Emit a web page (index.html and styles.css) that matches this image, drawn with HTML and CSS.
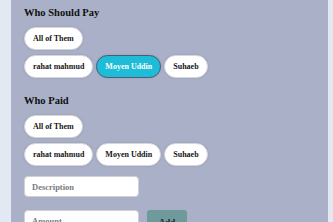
FILE: index.html
```html
<!DOCTYPE html>
<html>
<head>
<meta charset="utf-8">
<link rel="stylesheet" href="styles.css">
</head>
<body>
<div class="panel">
  <h3 class="title">Who Should Pay</h3>
  <div class="row first"><button class="pill">All of Them</button></div>
  <div class="row">
    <button class="pill">rahat mahmud</button>
    <button class="pill active">Moyen Uddin</button>
    <button class="pill">Suhaeb</button>
  </div>
  <h3 class="title second">Who Paid</h3>
  <div class="row first"><button class="pill">All of Them</button></div>
  <div class="row">
    <button class="pill">rahat mahmud</button>
    <button class="pill">Moyen Uddin</button>
    <button class="pill">Suhaeb</button>
  </div>
  <div class="field"><input class="input" placeholder="Description"></div>
  <div class="field line">
    <input class="input" placeholder="Amount">
    <button class="add">Add</button>
  </div>
</div>
</body>
</html>
```
FILE: styles.css
```css
html, body {
  margin: 0;
  padding: 0;
  height: 100%;
  overflow: hidden;
  background: #e2e9f3;
  font-family: "Liberation Serif", serif;
}
.panel {
  margin-left: 11px;
  width: 304px;
  height: 100%;
  background: #aab0c7;
  padding: 6px 0 0 13px;
  box-sizing: content-box;
  overflow: hidden;
}
.title {
  margin: 0;
  font-size: 10.5px;
  line-height: 14px;
  font-weight: bold;
  color: #111;
}
.title.second {
  margin-top: 16px;
}
.row {
  display: flex;
  gap: 3px;
  margin-top: 5px;
}
.row.first {
  margin-top: 7px;
}
.pill {
  height: 23px;
  padding: 0 8px;
  border: 1px solid #d6d6dc;
  border-radius: 12px;
  background: #fff;
  font-family: "Liberation Serif", serif;
  font-weight: bold;
  font-size: 8px;
  color: #161616;
  box-shadow: 0 0 2px rgba(0,0,0,0.15);
}
.pill.active {
  background: #1ebcd7;
  border: 1.5px solid #4c5a7c;
  color: #fff;
}
.field {
  margin-top: 10px;
  display: flex;
  gap: 8px;
}
.field.line {
  margin-top: 13px;
}
.input {
  width: 115px;
  height: 21px;
  box-sizing: border-box;
  border: 1px solid #d0d0d8;
  border-radius: 4px;
  background: #fff;
  padding: 0 7px;
  font-family: "Liberation Serif", serif;
  font-weight: bold;
  font-size: 8.5px;
}
.input::placeholder {
  color: #7a7a80;
}
.add {
  width: 40px;
  height: 24px;
  border: none;
  border-radius: 3px;
  background: #6e9a9c;
  font-family: "Liberation Serif", serif;
  font-weight: bold;
  font-size: 9px;
  color: #1a2a2a;
}
```
